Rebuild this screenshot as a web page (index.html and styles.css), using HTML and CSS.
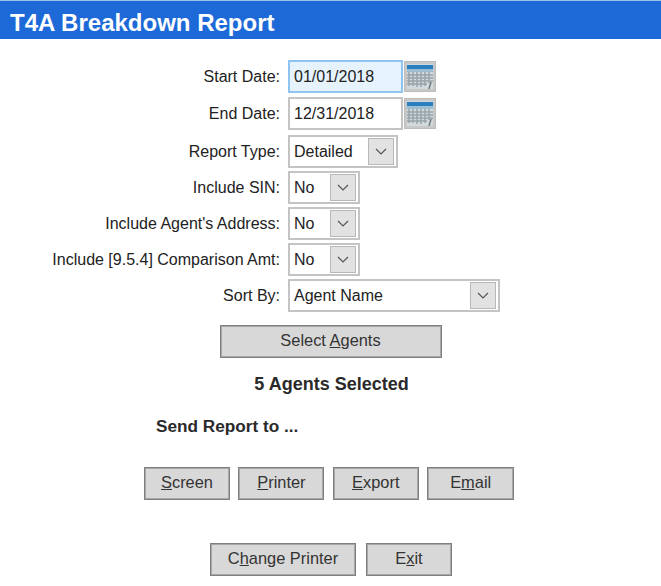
FILE: index.html
```html
<!DOCTYPE html>
<html lang="en">
<head>
    <meta charset="UTF-8">
    <title>T4A Breakdown Report</title>
    <link rel="stylesheet" href="styles.css">
</head>
<body>
    <div class="titulo">T4A Breakdown Report</div>

    <form class="campos">
        <div class="fila">
            <label>Start Date:</label>
            <div class="caja fecha activa">01/01/2018</div>
            <svg class="calendario" viewBox="0 0 32 31">
                <rect x="0.5" y="0.5" width="31" height="30" fill="#c8c8c8" stroke="#bcbcbc"/>
                <rect x="3" y="3" width="26" height="25" fill="#d3dade"/>
                <rect x="3" y="4" width="26" height="4" fill="#2a7fbe"/>
                <rect x="3" y="8" width="26" height="3" fill="#9dbdd2"/>
                <path d="M5 11v14M9 11v14M13 11v15M17 11v15M21 11v14M25 11v11M3 14h26M3 17h26M3 20h26M3 23h20" stroke="#98a4ab" stroke-width="1.5"/>
                <path d="M27 21l-2 7" stroke="#6d7880" stroke-width="1.5"/>
            </svg>
        </div>
        <div class="fila">
            <label>End Date:</label>
            <div class="caja fecha">12/31/2018</div>
            <svg class="calendario" viewBox="0 0 32 31">
                <rect x="0.5" y="0.5" width="31" height="30" fill="#c8c8c8" stroke="#bcbcbc"/>
                <rect x="3" y="3" width="26" height="25" fill="#d3dade"/>
                <rect x="3" y="4" width="26" height="4" fill="#2a7fbe"/>
                <rect x="3" y="8" width="26" height="3" fill="#9dbdd2"/>
                <path d="M5 11v14M9 11v14M13 11v15M17 11v15M21 11v14M25 11v11M3 14h26M3 17h26M3 20h26M3 23h20" stroke="#98a4ab" stroke-width="1.5"/>
                <path d="M27 21l-2 7" stroke="#6d7880" stroke-width="1.5"/>
            </svg>
        </div>
        <div class="fila separada">
            <label>Report Type:</label>
            <div class="caja lista tipo">Detailed
                <span class="flecha"><svg viewBox="0 0 12 7"><path d="M1 1l5 5 5-5" fill="none" stroke="#555" stroke-width="1.2"/></svg></span>
            </div>
        </div>
        <div class="fila">
            <label>Include SIN:</label>
            <div class="caja lista corta">No
                <span class="flecha"><svg viewBox="0 0 12 7"><path d="M1 1l5 5 5-5" fill="none" stroke="#555" stroke-width="1.2"/></svg></span>
            </div>
        </div>
        <div class="fila">
            <label>Include Agent's Address:</label>
            <div class="caja lista corta">No
                <span class="flecha"><svg viewBox="0 0 12 7"><path d="M1 1l5 5 5-5" fill="none" stroke="#555" stroke-width="1.2"/></svg></span>
            </div>
        </div>
        <div class="fila">
            <label>Include [9.5.4] Comparison Amt:</label>
            <div class="caja lista corta">No
                <span class="flecha"><svg viewBox="0 0 12 7"><path d="M1 1l5 5 5-5" fill="none" stroke="#555" stroke-width="1.2"/></svg></span>
            </div>
        </div>
        <div class="fila">
            <label>Sort By:</label>
            <div class="caja lista larga">Agent Name
                <span class="flecha"><svg viewBox="0 0 12 7"><path d="M1 1l5 5 5-5" fill="none" stroke="#555" stroke-width="1.2"/></svg></span>
            </div>
        </div>
    </form>

    <div class="centro agentes">
        <button class="boton ancho" type="button">Select <u>A</u>gents</button>
    </div>
    <div class="seleccionados">5 Agents Selected</div>
    <div class="enviar">Send Report to ...</div>

    <div class="botones destino">
        <button class="boton" type="button"><u>S</u>creen</button>
        <button class="boton" type="button"><u>P</u>rinter</button>
        <button class="boton" type="button"><u>E</u>xport</button>
        <button class="boton ultimo" type="button">E<u>m</u>ail</button>
    </div>

    <div class="botones final">
        <button class="boton cambiar" type="button">C<u>h</u>ange Printer</button>
        <button class="boton" type="button">E<u>x</u>it</button>
    </div>
</body>
</html>
```

FILE: styles.css
```css
body {
    margin: 0;
    background-color: #ffffff;
    font-family: "Liberation Sans", Arial, sans-serif;
    font-size: 16px;
    color: #222222;
    height: 586px;
    overflow: hidden;
    border-top: 1px solid #9cc2ee;
    box-sizing: border-box;
}

.titulo {
    background-color: #1e69d8;
    color: #ffffff;
    font-size: 24px;
    font-weight: bold;
    height: 38px;
    line-height: 43px;
    padding-left: 10px;
}

.campos {
    display: flex;
    flex-direction: column;
    gap: 3px;
    margin: 21px 0 0 0;
}

.fila {
    display: flex;
    align-items: center;
    height: 33px;
}

.fila label {
    width: 280px;
    text-align: right;
    margin-right: 8px;
    flex-shrink: 0;
}

.separada {
    margin-top: 2px;
}

.fila:nth-child(2) {
    margin-top: 1px;
}

.caja {
    box-sizing: border-box;
    height: 33px;
    border: 2px solid #c4c4c4;
    background-color: #ffffff;
    padding-left: 4px;
    display: flex;
    align-items: center;
    justify-content: space-between;
}

.fecha {
    width: 115px;
}

.activa {
    background-color: #e6f3fd;
    border-color: #8fc4f0;
}

.calendario {
    width: 32px;
    height: 31px;
    margin-left: 1px;
}

.lista {
    padding-right: 2px;
}

.tipo {
    width: 110px;
}

.corta {
    width: 72px;
}

.larga {
    width: 212px;
}

.flecha {
    box-sizing: border-box;
    width: 26px;
    height: 27px;
    background-color: #e2e2e2;
    border: 1px solid #b8b8b8;
    display: flex;
    align-items: center;
    justify-content: center;
}

.flecha svg {
    width: 12px;
    height: 7px;
}

.boton {
    box-sizing: border-box;
    width: 86px;
    height: 33px;
    padding: 0 0 2px 0;
    background-color: #d8d8d8;
    border: 1px solid #7f7f7f;
    box-shadow: inset 0 0 0 1px #a8a8a8;
    font-family: "Liberation Sans", Arial, sans-serif;
    font-size: 16.4px;
    color: #333333;
}

.ancho {
    width: 222px;
}

.cambiar {
    width: 146px;
}

.ultimo {
    width: 87px;
}

.centro {
    display: flex;
    justify-content: center;
}

.agentes {
    margin-top: 13px;
}

.seleccionados {
    text-align: center;
    font-size: 18px;
    font-weight: bold;
    margin-top: 16px;
    padding-left: 2px;
    line-height: 20px;
    color: #2a2a2a;
}

.enviar {
    font-size: 17.2px;
    font-weight: bold;
    margin: 22px 0 0 156px;
    line-height: 20px;
    color: #2a2a2a;
}

.botones {
    display: flex;
}

.destino {
    margin: 31px 0 0 144px;
    gap: 8.4px;
}

.final {
    margin: 43px 0 0 210px;
    gap: 10px;
}
```
